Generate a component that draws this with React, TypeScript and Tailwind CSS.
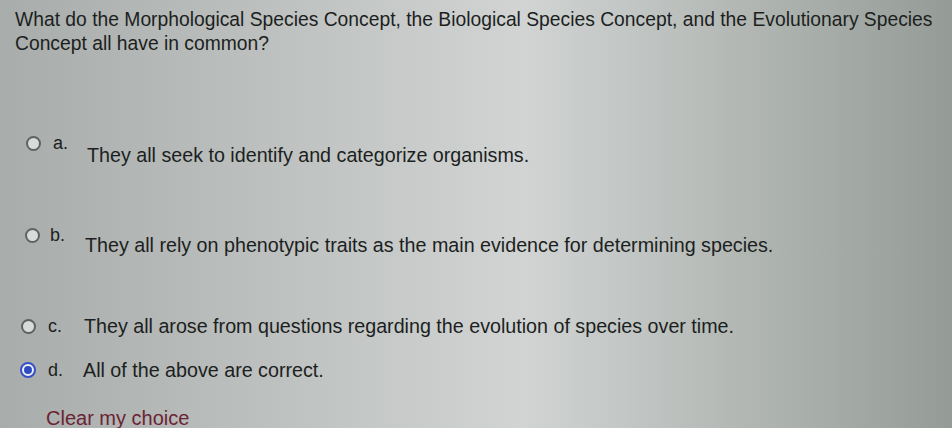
import React from "react"

function Radio({ checked }: { checked?: boolean }) {
  if (checked) {
    return (
      <span className="flex size-[16px] shrink-0 items-center justify-center rounded-full border-[2px] border-[#3550c8] bg-[#eef0f6]">
        <span className="size-[8px] rounded-full bg-[#2f4cc4]" />
      </span>
    )
  }
  return (
    <span className="size-[15px] shrink-0 rounded-full border-[2px] border-[#5f6261] bg-[#d8dbda]" />
  )
}

export default function App() {
  return (
    <div
      className="h-[428px] w-[952px] overflow-hidden bg-linear-to-r from-[#a8acaa] via-[#d1d4d3] via-55% to-[#959c97] text-[#1c1f1e]"
      style={{ fontFamily: '"Liberation Sans", Arial, sans-serif' }}
    >
      <div className="pl-[15px] pt-[8px] text-[19.3px] leading-[24px] whitespace-nowrap">
        What do the Morphological Species Concept, the Biological Species Concept, and the Evolutionary Species
        <br />
        Concept all have in common?
      </div>

      <div className="flex flex-col">
        {/* a */}
        <div className="mt-[75px] flex items-start pl-[26px]">
          <div className="flex items-center gap-[12px] pt-[2px]">
            <Radio />
            <span className="text-[18px] leading-[20px]">a.</span>
          </div>
          <span className="ml-[19px] mt-[12px] text-[19.7px] leading-[24px]">
            They all seek to identify and categorize organisms.
          </span>
        </div>

        {/* b */}
        <div className="mt-[58px] flex items-start pl-[25px]">
          <div className="flex items-center gap-[10px]">
            <Radio />
            <span className="text-[18px] leading-[20px]">b.</span>
          </div>
          <span className="ml-[20px] mt-[8px] text-[19.7px] leading-[24px]">
            They all rely on phenotypic traits as the main evidence for determining species.
          </span>
        </div>

        {/* c */}
        <div className="mt-[57px] flex items-center pl-[21px]">
          <Radio />
          <span className="ml-[12px] w-[36px] text-[18px] leading-[24px]">c.</span>
          <span className="text-[19.7px] leading-[24px]">
            They all arose from questions regarding the evolution of species over time.
          </span>
        </div>

        {/* d */}
        <div className="mt-[20px] flex items-center pl-[20px]">
          <Radio checked />
          <span className="ml-[12px] w-[35px] text-[18px] leading-[24px]">d.</span>
          <span className="text-[19.7px] leading-[24px]">All of the above are correct.</span>
        </div>

        <div className="mt-[24px] pl-[46px] text-[20px] leading-[24px] text-[#6b2434]">
          Clear my choice
        </div>
      </div>
    </div>
  )
}
